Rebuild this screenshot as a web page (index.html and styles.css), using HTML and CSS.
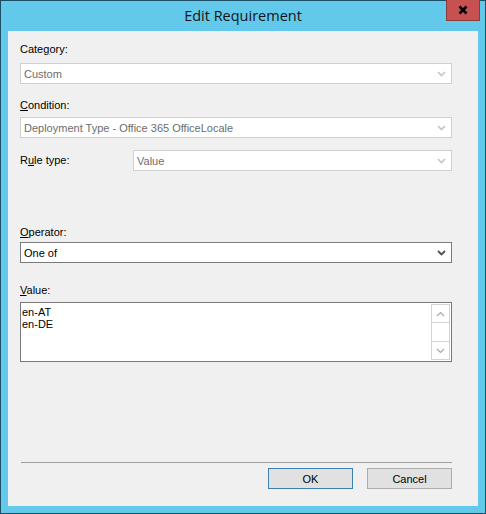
FILE: index.html
```html
<!DOCTYPE html>
<html>
<head>
<meta charset="utf-8">
<link rel="stylesheet" href="styles.css">
</head>
<body>
<div class="window">
  <div class="titlebar">
    <span class="title">Edit Requirement</span>
    <div class="close">
      <svg width="12" height="10" viewBox="0 0 12 10"><path d="M2.5 1.5 L9.5 8.5 M9.5 1.5 L2.5 8.5" stroke="#000" stroke-width="2.6" fill="none"/></svg>
    </div>
  </div>
  <div class="client">
    <div class="label lb-category">Cate<u>g</u>ory:</div>
    <div class="combo disabled"><span class="val">Custom</span><svg class="chev" width="9" height="6" viewBox="0 0 9 6"><path d="M1 1 L4.5 4.5 L8 1" stroke="#c4c4c4" stroke-width="1.6" fill="none"/></svg></div>

    <div class="label lb-condition"><u>C</u>ondition:</div>
    <div class="combo disabled"><span class="val">Deployment Type - Office 365 OfficeLocale</span><svg class="chev" width="9" height="6" viewBox="0 0 9 6"><path d="M1 1 L4.5 4.5 L8 1" stroke="#c4c4c4" stroke-width="1.6" fill="none"/></svg></div>

    <div class="row-rule">
      <div class="label rule-label">R<u>u</u>le type:</div>
      <div class="combo disabled rule-combo"><span class="val">Value</span><svg class="chev" width="9" height="6" viewBox="0 0 9 6"><path d="M1 1 L4.5 4.5 L8 1" stroke="#c4c4c4" stroke-width="1.6" fill="none"/></svg></div>
    </div>

    <div class="label lb-operator"><u>O</u>perator:</div>
    <div class="combo enabled"><span class="val">One of</span><svg class="chev" width="9" height="6" viewBox="0 0 9 6"><path d="M1 1 L4.5 4.5 L8 1" stroke="#505050" stroke-width="1.8" fill="none"/></svg></div>

    <div class="label lb-value"><u>V</u>alue:</div>
    <div class="textbox">
      <div class="lines">en-AT<br>en-DE</div>
      <div class="scrollbar">
        <div class="sbtn"><svg width="9" height="6" viewBox="0 0 9 6"><path d="M1 5 L4.5 1.5 L8 5" stroke="#a8a8a8" stroke-width="1.2" fill="none"/></svg></div>
        <div class="strack"></div>
        <div class="sbtn"><svg width="9" height="6" viewBox="0 0 9 6"><path d="M1 1 L4.5 4.5 L8 1" stroke="#a8a8a8" stroke-width="1.2" fill="none"/></svg></div>
      </div>
    </div>

    <div class="separator"></div>
    <div class="buttons">
      <div class="btn default">OK</div>
      <div class="btn">Cancel</div>
    </div>
  </div>
</div>
</body>
</html>
```

FILE: styles.css
```css
html, body {
  margin: 0;
  padding: 0;
  background: #ffffff;
}
.window {
  width: 486px;
  height: 514px;
  box-sizing: border-box;
  border: 1px solid #1c4f66;
  background: #63c9ea;
  display: flex;
  flex-direction: column;
  padding: 0 7px 7px 7px;
  position: relative;
  font-family: "Liberation Sans", Arial, sans-serif;
  font-size: 11px;
  color: #000;
}
.titlebar {
  height: 30px;
  display: flex;
  align-items: center;
  justify-content: center;
}
.title {
  font-family: "Open Sans", "Noto Sans", sans-serif;
  font-size: 14.5px;
  color: #141414;
  margin-top: -1px;
}
.close {
  position: absolute;
  top: -1px;
  right: 5px;
  width: 32px;
  height: 20px;
  background: #c75050;
  border: 1px solid #8c3b3b;
  border-top: none;
  display: flex;
  align-items: center;
  justify-content: center;
}
.client {
  flex: 1;
  background: #f0f0f0;
  display: flex;
  flex-direction: column;
  padding: 12px 26px 0 12px;
}
.label {
  height: 13px;
  line-height: 13px;
}
.lb-category { margin-bottom: 7px; }
.lb-condition { margin-top: 15px; margin-bottom: 5px; }
.lb-operator { margin-top: 55px; margin-bottom: 3px; }
.lb-value { margin-top: 21px; margin-bottom: 5px; }
.combo {
  height: 21px;
  box-sizing: border-box;
  background: #fff;
  display: flex;
  align-items: center;
  padding: 0 5px 0 3px;
}
.combo .val {
  flex: 1;
  white-space: nowrap;
}
.combo.disabled {
  border: 1px solid #d0d0d0;
  color: #6d6d6d;
}
.combo.enabled {
  border: 1px solid #7a7a7a;
}
.chev {
  display: block;
}
.row-rule {
  display: flex;
  align-items: center;
  margin-top: 12px;
}
.rule-label {
  width: 113px;
}
.rule-combo {
  flex: 1;
}
.textbox {
  height: 60px;
  box-sizing: border-box;
  border: 1px solid #7a7a7a;
  background: #fff;
  display: flex;
}
.lines {
  flex: 1;
  padding: 3px 0 0 1px;
  line-height: 12px;
}
.scrollbar {
  width: 17px;
  margin: 1px 1px 1px 0;
  display: flex;
  flex-direction: column;
  border: 1px solid #d4d4d4;
}
.sbtn {
  height: 17px;
  display: flex;
  align-items: center;
  justify-content: center;
}
.strack {
  flex: 1;
  border-top: 1px solid #d4d4d4;
  border-bottom: 1px solid #d4d4d4;
}
.separator {
  margin-top: 100px;
  height: 1px;
  background: #a0a0a0;
  margin-left: 1px;
}
.buttons {
  display: flex;
  justify-content: flex-end;
  gap: 14px;
  margin-top: 5px;
}
.btn {
  width: 85px;
  height: 21px;
  box-sizing: border-box;
  border: 1px solid #adadad;
  background: #e1e1e1;
  display: flex;
  align-items: center;
  justify-content: center;
}
.btn.default {
  border-color: #3c7fb1;
}
```
